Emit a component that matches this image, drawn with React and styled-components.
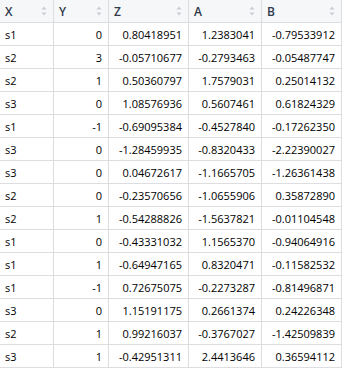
import React from 'react';
import styled, {createGlobalStyle} from 'styled-components';

const GlobalStyle = createGlobalStyle`
    html, body {
        margin: 0;
        padding: 0;
        background: #ffffff;
    }
`;

const columns = [
    {key: 'X', width: 54, align: 'left'},
    {key: 'Y', width: 55, align: 'right'},
    {key: 'Z', width: 80, align: 'right'},
    {key: 'A', width: 73, align: 'right'},
    {key: 'B', width: 80, align: 'right'},
];

const rows = [
    ['s1', '0', '0.80418951', '1.2383041', '-0.79533912'],
    ['s2', '3', '-0.05710677', '-0.2793463', '-0.05487747'],
    ['s2', '1', '0.50360797', '1.7579031', '0.25014132'],
    ['s3', '0', '1.08576936', '0.5607461', '0.61824329'],
    ['s1', '-1', '-0.69095384', '-0.4527840', '-0.17262350'],
    ['s3', '0', '-1.28459935', '-0.8320433', '-2.22390027'],
    ['s3', '0', '0.04672617', '-1.1665705', '-1.26361438'],
    ['s2', '0', '-0.23570656', '-1.0655906', '0.35872890'],
    ['s2', '1', '-0.54288826', '-1.5637821', '-0.01104548'],
    ['s1', '0', '-0.43331032', '1.1565370', '-0.94064916'],
    ['s1', '1', '-0.64947165', '0.8320471', '-0.11582532'],
    ['s1', '-1', '0.72675075', '-0.2273287', '-0.81496871'],
    ['s3', '0', '1.15191175', '0.2661374', '0.24226348'],
    ['s2', '1', '0.99216037', '-0.3767027', '-1.42509839'],
    ['s3', '1', '-0.42951311', '2.4413646', '0.36594112'],
];

const Grid = styled.div`
    display: grid;
    grid-template-columns: ${props => props.$template};
    width: 342px;
    font-family: "Open Sans", "Liberation Sans", sans-serif;
    font-size: 11px;
    color: #000000;
`;

const HeadCell = styled.div`
    box-sizing: border-box;
    height: 23px;
    display: flex;
    align-items: center;
    justify-content: space-between;
    padding: 0 6px 0 5px;
    background: #f6f7f9;
    border-right: 1px solid #dcdee2;
    border-bottom: 1px solid #dcdee2;
    color: #2f3a4a;
    font-weight: 600;
    font-size: 12px;
`;

const Cell = styled.div`
    box-sizing: border-box;
    height: 23px;
    display: flex;
    align-items: center;
    justify-content: ${props => (props.$align === 'right' ? 'flex-end' : 'flex-start')};
    padding: 0 6px 0 5px;
    background: #ffffff;
    border-right: 1px solid #dcdee2;
    border-bottom: 1px solid #dcdee2;
    white-space: nowrap;
`;

const SortIcon = () => (
    <svg width="6" height="10" viewBox="0 0 6 10">
        <path d="M3 0.5 L5.5 3.5 L0.5 3.5 Z" fill="#c9cdd3"/>
        <path d="M3 9.5 L5.5 6.5 L0.5 6.5 Z" fill="#c9cdd3"/>
    </svg>
);

export default function App() {
    const template = columns.map(c => `${c.width}px`).join(' ');
    return (
        <>
            <GlobalStyle/>
            <Grid $template={template}>
                {columns.map(c => (
                    <HeadCell key={c.key}>
                        <span>{c.key}</span>
                        <SortIcon/>
                    </HeadCell>
                ))}
                {rows.map((row, i) =>
                    row.map((value, j) => (
                        <Cell key={`${i}-${j}`} $align={columns[j].align}>{value}</Cell>
                    ))
                )}
            </Grid>
        </>
    );
}
